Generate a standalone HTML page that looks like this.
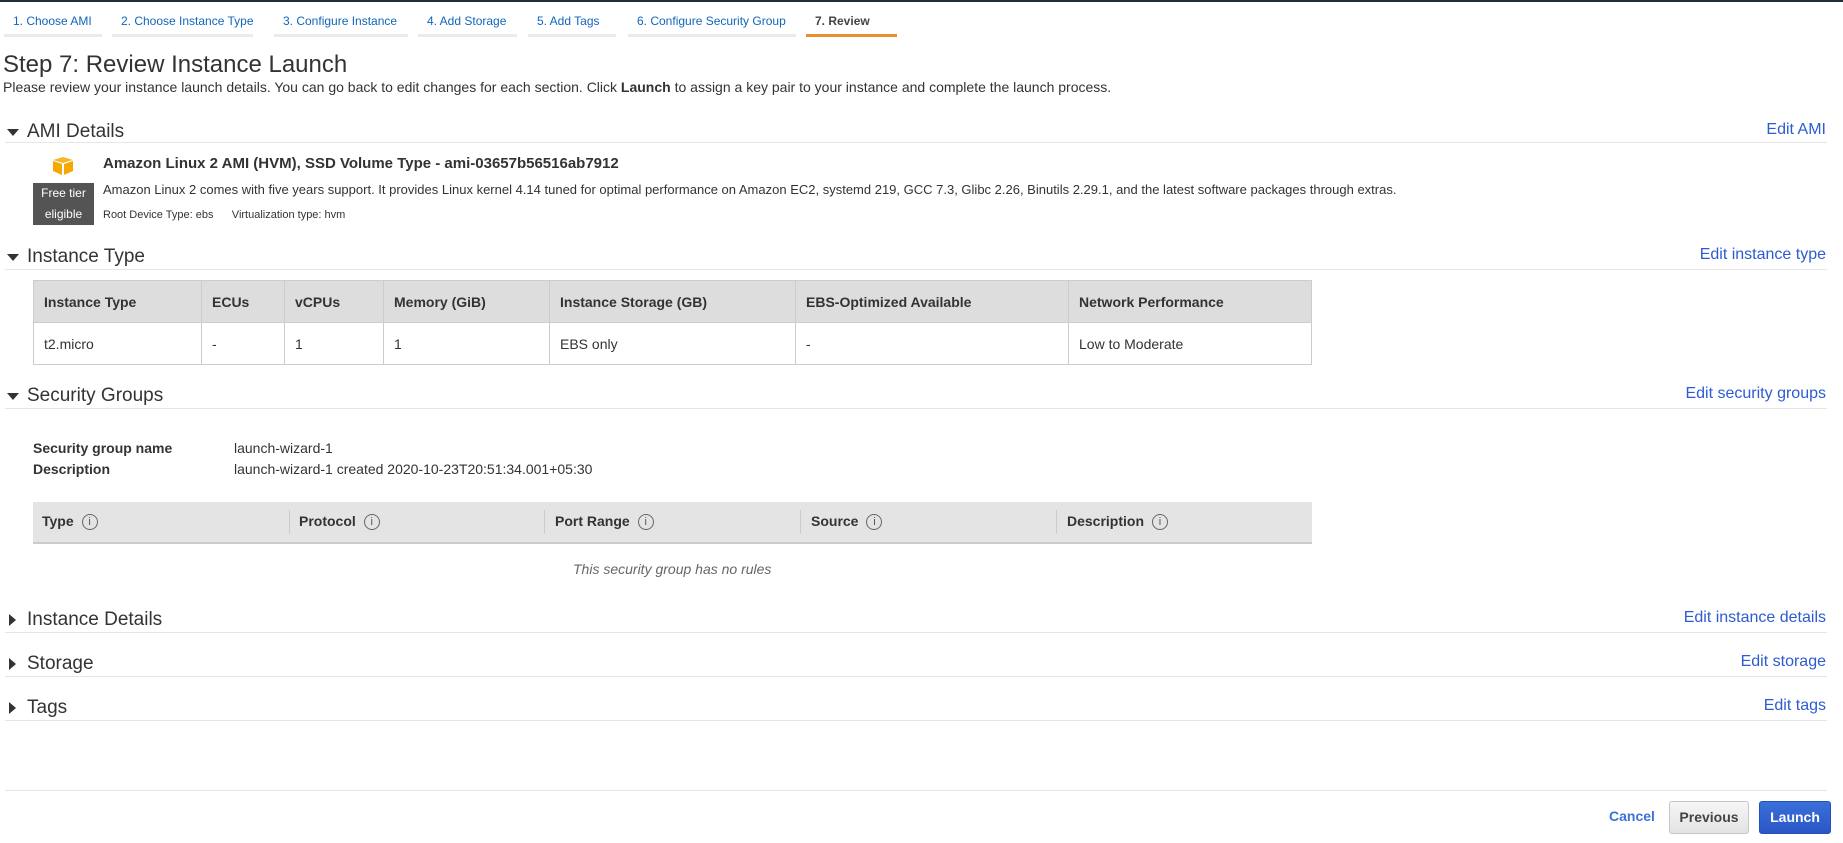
<!DOCTYPE html>
<html><head><meta charset="utf-8"><style>
*{margin:0;padding:0;box-sizing:border-box}
body{width:1843px;height:843px;background:#fff;font-family:"Liberation Sans",Arial,sans-serif;color:#333;position:relative;overflow:hidden}
.a{position:absolute;white-space:nowrap}
.tab{position:absolute;top:0;height:37px;border-bottom:3px solid #eaeaea;color:#1166bb;font-size:12px;line-height:42px;padding-left:9px;white-space:nowrap;overflow:hidden}
.tab.on{border-bottom-color:#ec8e2a;color:#444;font-weight:bold}
.h{font-size:19px;color:#333}
.tri{position:absolute;width:0;height:0}
.down{border-left:6px solid transparent;border-right:6px solid transparent;border-top:7px solid #333}
.right{border-top:6px solid transparent;border-bottom:6px solid transparent;border-left:7px solid #333}
.line{position:absolute;left:5px;width:1822px;height:1px;background:#e6e6e6}
.edit{position:absolute;right:17px;color:#2d5bd0;font-size:16px}
table{border-collapse:collapse;position:absolute;font-size:14px}
td,th{text-align:left;padding:0 10px;border:1px solid #ccc}
th{background:#dddddd;font-weight:bold;height:42px}
td{height:42px}
.i{display:inline-block;width:16px;height:16px;border:1px solid #666;border-radius:50%;font-size:11px;line-height:14px;text-align:center;color:#555;font-weight:normal;margin-left:8px;vertical-align:1px}
</style></head><body>
<div class="a" style="left:0;top:0;width:1843px;height:2px;background:#232f3e"></div>
<div class="tab" style="left:4px;width:98px">1. Choose AMI</div>
<div class="tab" style="left:112px;width:141px">2. Choose Instance Type</div>
<div class="tab" style="left:274px;width:134px">3. Configure Instance</div>
<div class="tab" style="left:418px;width:99px">4. Add Storage</div>
<div class="tab" style="left:528px;width:88px">5. Add Tags</div>
<div class="tab" style="left:628px;width:168px">6. Configure Security Group</div>
<div class="tab on" style="left:806px;width:91px">7. Review</div>

<div class="a" style="left:3px;top:51px;font-size:24px;color:#333">Step 7: Review Instance Launch</div>
<div class="a" style="left:3px;top:79px;font-size:14px">Please review your instance launch details. You can go back to edit changes for each section. Click <b>Launch</b> to assign a key pair to your instance and complete the launch process.</div>

<div class="tri down" style="left:7px;top:129px"></div>
<div class="a h" style="left:27px;top:121px">AMI Details</div>
<div class="edit" style="top:121px">Edit AMI</div>
<div class="line" style="top:142px"></div>

<svg class="a" style="left:52px;top:156px" width="22" height="19" viewBox="0 0 22 19"><polygon points="1,4 11,1 21,4 11,7" fill="#f7b528"/><polygon points="1,5 10,8 10,19 1,15" fill="#f6a800"/><polygon points="12,8 21,5 21,15 12,19" fill="#f6a800"/></svg>
<div class="a" style="left:33px;top:183px;width:61px;height:42px;background:#545454;color:#fff;font-size:12px;text-align:center;line-height:21px">Free tier<br>eligible</div>
<div class="a" style="left:103px;top:155px;font-size:15px;font-weight:bold;color:#333">Amazon Linux 2 AMI (HVM), SSD Volume Type - ami-03657b56516ab7912</div>
<div class="a" style="left:103px;top:182px;font-size:13px">Amazon Linux 2 comes with five years support. It provides Linux kernel 4.14 tuned for optimal performance on Amazon EC2, systemd 219, GCC 7.3, Glibc 2.26, Binutils 2.29.1, and the latest software packages through extras.</div>
<div class="a" style="left:103px;top:209px;font-size:11px">Root Device Type: ebs&nbsp;&nbsp;&nbsp;&nbsp;&nbsp;&nbsp;Virtualization type: hvm</div>

<div class="tri down" style="left:7px;top:254px"></div>
<div class="a h" style="left:27px;top:246px">Instance Type</div>
<div class="edit" style="top:246px">Edit instance type</div>
<div class="line" style="top:269px"></div>

<table style="left:33px;top:280px;width:1279px">
<tr><th style="width:168px">Instance Type</th><th style="width:83px">ECUs</th><th style="width:99px">vCPUs</th><th style="width:166px">Memory (GiB)</th><th style="width:246px">Instance Storage (GB)</th><th style="width:273px">EBS-Optimized Available</th><th>Network Performance</th></tr>
<tr><td>t2.micro</td><td>-</td><td>1</td><td>1</td><td>EBS only</td><td>-</td><td>Low to Moderate</td></tr>
</table>

<div class="tri down" style="left:7px;top:393px"></div>
<div class="a h" style="left:27px;top:385px">Security Groups</div>
<div class="edit" style="top:385px">Edit security groups</div>
<div class="line" style="top:408px"></div>

<div class="a" style="left:33px;top:440px;font-size:14px;font-weight:bold">Security group name</div>
<div class="a" style="left:234px;top:440px;font-size:14px">launch-wizard-1</div>
<div class="a" style="left:33px;top:461px;font-size:14px;font-weight:bold">Description</div>
<div class="a" style="left:234px;top:461px;font-size:14px">launch-wizard-1 created 2020-10-23T20:51:34.001+05:30</div>

<div class="a" style="left:33px;top:502px;width:1279px;height:42px;background:#e4e4e4;border-bottom:2px solid #ccc;font-size:14px;font-weight:bold">
<div class="a" style="left:9px;top:11px">Type<span class="i">i</span></div>
<div class="a" style="left:256px;top:8px;width:1px;height:24px;background:#ccc"></div>
<div class="a" style="left:266px;top:11px">Protocol<span class="i">i</span></div>
<div class="a" style="left:511px;top:8px;width:1px;height:24px;background:#ccc"></div>
<div class="a" style="left:522px;top:11px">Port Range<span class="i">i</span></div>
<div class="a" style="left:767px;top:8px;width:1px;height:24px;background:#ccc"></div>
<div class="a" style="left:778px;top:11px">Source<span class="i">i</span></div>
<div class="a" style="left:1023px;top:8px;width:1px;height:24px;background:#ccc"></div>
<div class="a" style="left:1034px;top:11px">Description<span class="i">i</span></div>
</div>
<div class="a" style="left:573px;top:561px;font-size:14px;font-style:italic;color:#666">This security group has no rules</div>

<div class="tri right" style="left:9px;top:614px"></div>
<div class="a h" style="left:27px;top:609px">Instance Details</div>
<div class="edit" style="top:609px">Edit instance details</div>
<div class="line" style="top:632px"></div>

<div class="tri right" style="left:9px;top:658px"></div>
<div class="a h" style="left:27px;top:653px">Storage</div>
<div class="edit" style="top:653px">Edit storage</div>
<div class="line" style="top:676px"></div>

<div class="tri right" style="left:9px;top:702px"></div>
<div class="a h" style="left:27px;top:697px">Tags</div>
<div class="edit" style="top:697px">Edit tags</div>
<div class="line" style="top:720px"></div>

<div class="line" style="top:790px"></div>
<div class="a" style="left:1609px;top:808px;font-size:14px;font-weight:bold;color:#3b73d9">Cancel</div>
<div class="a" style="left:1669px;top:801px;width:80px;height:33px;border:1px solid #c6c6c6;border-radius:3px;background:linear-gradient(#f6f6f6,#e3e3e3);font-size:14px;font-weight:bold;color:#444;text-align:center;line-height:31px">Previous</div>
<div class="a" style="left:1759px;top:801px;width:72px;height:33px;border:1px solid #2451b8;border-radius:3px;background:linear-gradient(#3a6fd9,#2a57c6);font-size:14px;font-weight:bold;color:#fff;text-align:center;line-height:31px">Launch</div>
</body></html>
